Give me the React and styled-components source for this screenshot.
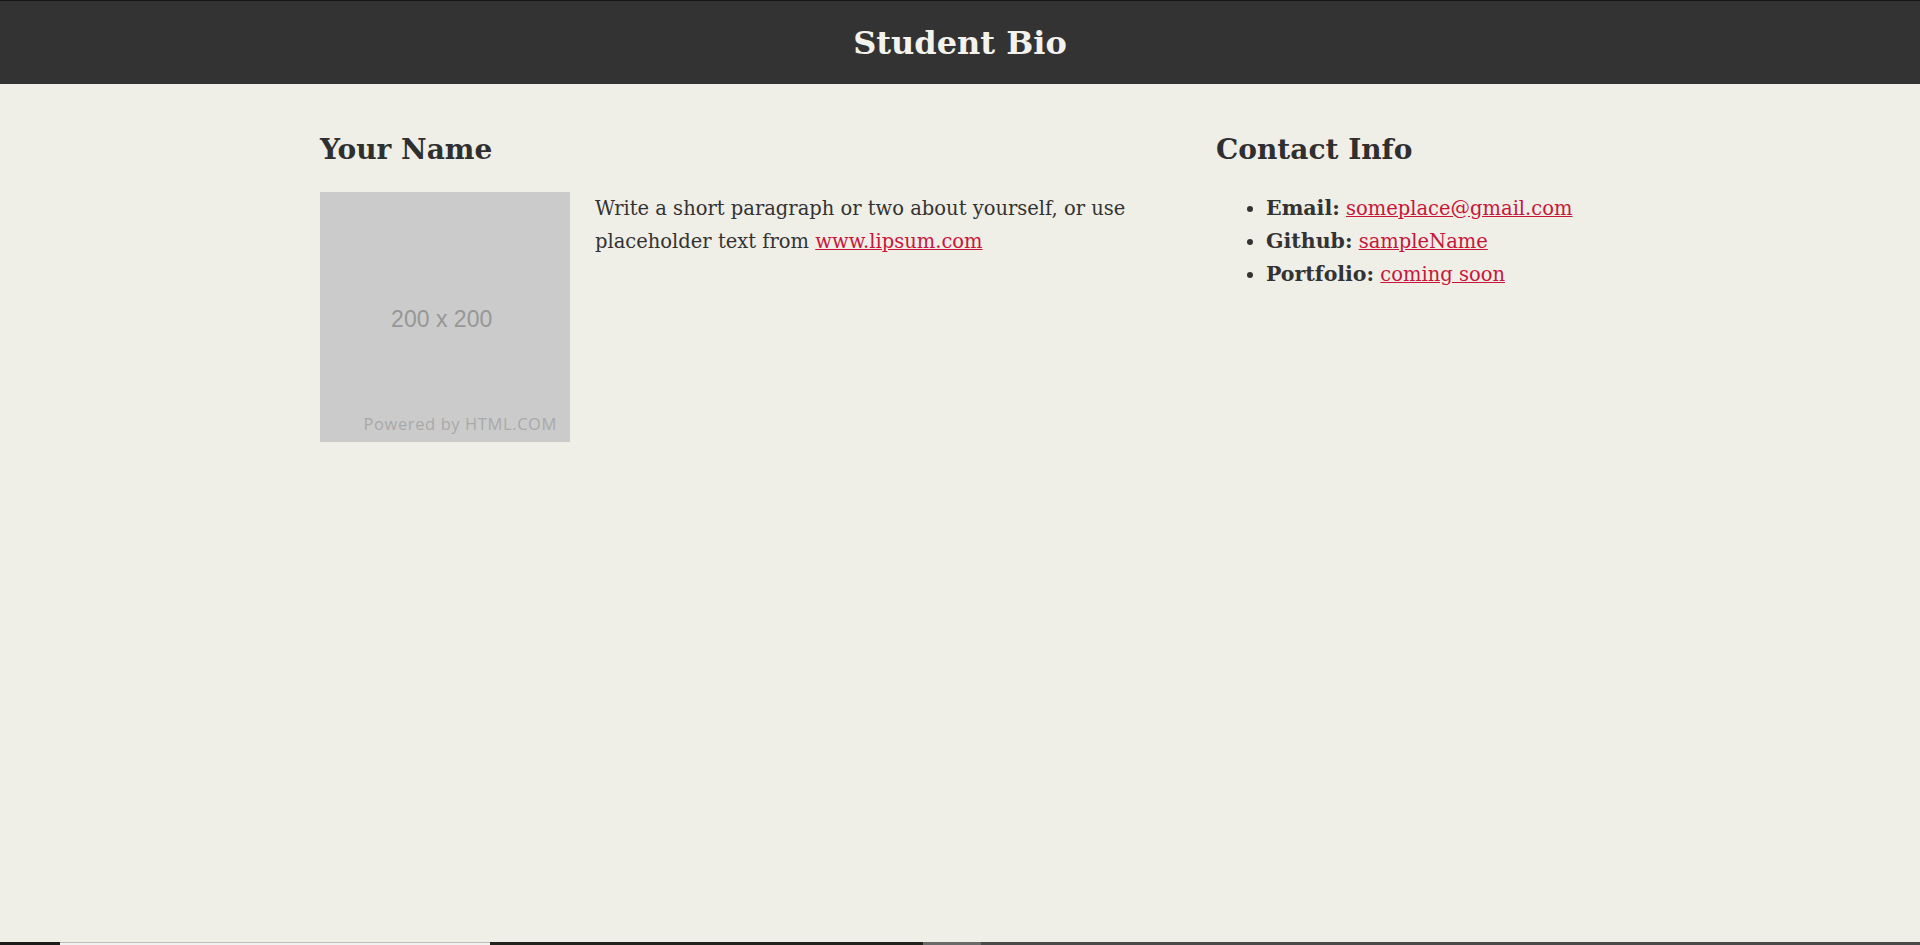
import React from 'react'
import styled, {createGlobalStyle} from 'styled-components'

const GlobalStyle = createGlobalStyle`
    *{
        box-sizing: border-box;
    }
    body{
        margin: 0;
        background-color: #efeee7;
        color: #333333;
        font-family: "DejaVu Serif", Georgia, serif;
    }
`

const contacts = [
    {label: 'Email:', text: 'someplace@gmail.com'},
    {label: 'Github:', text: 'sampleName'},
    {label: 'Portfolio:', text: 'coming soon'},
]

const taskbar = [
    {width: 60, color: '#1c1c1a'},
    {width: 430, color: '#f2f2f0', edge: true},
    {width: 433, color: '#23231e'},
    {width: 58, color: '#6a6a6a'},
    {width: 0, color: '#4a4a4a', grow: true},
]

function App() {
    return (
        <>
            <GlobalStyle />
            <Header>
                <Title>Student Bio</Title>
            </Header>
            <Main>
                <Column>
                    <SectionTitle>Your Name</SectionTitle>
                    <BioRow>
                        <Placeholder>
                            <Size>200 x 200</Size>
                            <Powered>Powered by HTML.COM</Powered>
                        </Placeholder>
                        <Paragraph>
                            Write a short paragraph or two about yourself, or use placeholder text from{' '}
                            <TextLink href="#">www.lipsum.com</TextLink>
                        </Paragraph>
                    </BioRow>
                </Column>
                <Column>
                    <SectionTitle>Contact Info</SectionTitle>
                    <ContactList>
                        {contacts.map(c => (
                            <li key={c.label}>
                                <strong>{c.label}</strong> <TextLink href="#">{c.text}</TextLink>
                            </li>
                        ))}
                    </ContactList>
                </Column>
            </Main>
            <Taskbar>
                {taskbar.map((t, i) => (
                    <TaskSegment key={i} color={t.color} edge={t.edge} grow={t.grow} style={{width: t.width}} />
                ))}
            </Taskbar>
        </>
    )
}

export default App


const Header = styled.header`
    height: 84px;
    background-color: #333333;
    border-top: 1px solid #161616;
    display: flex;
    justify-content: center;
    align-items: center;
`

const Title = styled.h1`
    margin: 0;
    font-size: 32px;
    font-weight: 700;
    color: #f3f2ec;
    padding-top: 1px;
`

const Main = styled.main`
    width: 1280px;
    margin: 0 auto;
    display: grid;
    grid-template-columns: 896px 1fr;
    padding-top: 44px;
`

const Column = styled.section`
    display: flex;
    flex-direction: column;
`

const SectionTitle = styled.h2`
    margin: 0 0 20px 0;
    font-size: 28px;
    line-height: 44px;
    font-weight: 700;
    color: #2f2f2f;
`

const BioRow = styled.div`
    display: flex;
    align-items: flex-start;
    gap: 25px;
`

const Placeholder = styled.div`
    position: relative;
    flex: 0 0 250px;
    height: 250px;
    background-color: #cbcbcb;
    display: flex;
    align-items: center;
    justify-content: center;
`

const Size = styled.span`
    font-family: "Liberation Sans", Arial, sans-serif;
    font-size: 24px;
    color: #979797;
    transform: translateX(-3px) scaleX(0.96);
    margin-top: 4px;
`

const Powered = styled.span`
    position: absolute;
    right: 13px;
    bottom: 7px;
    font-family: "Open Sans", sans-serif;
    font-size: 16.5px;
    letter-spacing: 0.6px;
    color: #a9a9a9;
`

const Paragraph = styled.p`
    margin: 0;
    max-width: 560px;
    font-size: 19.5px;
    line-height: 33px;
`

const TextLink = styled.a`
    color: #c8163a;
    text-decoration: underline;
`

const ContactList = styled.ul`
    margin: 0;
    padding-left: 50px;
    font-size: 19.5px;
    line-height: 33px;

    strong{
        font-weight: 700;
        font-size: 20.5px;
    }
`

const Taskbar = styled.div`
    position: fixed;
    left: 0;
    right: 0;
    bottom: 0;
    height: 3px;
    display: flex;
`

const TaskSegment = styled.div`
    flex: ${props => props.grow ? '1 1 auto' : '0 0 auto'};
    background-color: ${props => props.color};
    border-top: ${props => props.edge ? '1px solid #bdbdbd' : 'none'};
`
